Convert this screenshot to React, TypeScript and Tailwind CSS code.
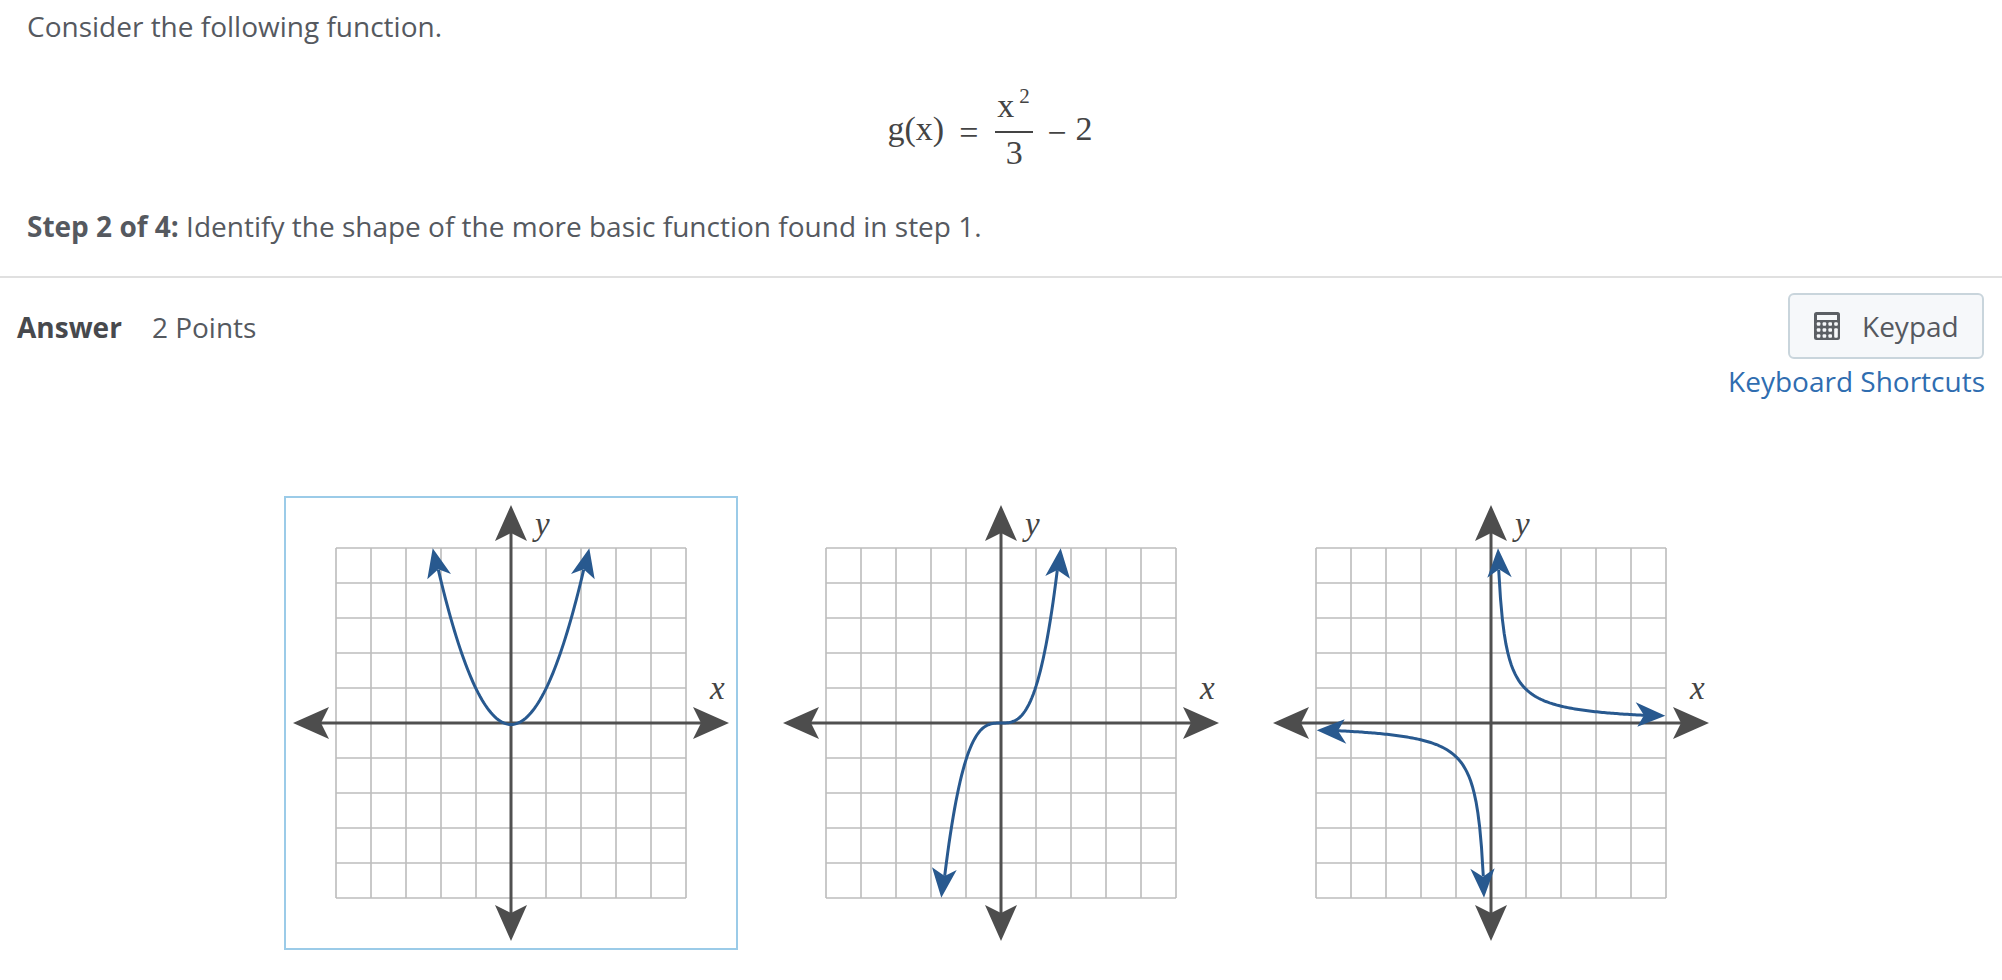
import type { ReactNode } from "react";

const GRID = [-175, -140, -105, -70, -35, 0, 35, 70, 105, 140, 175];

// samples a function into a path string, x in graph pixels
function plot(f: (x: number) => number, from: number, to: number) {
  const pts: string[] = [];
  const steps = 80;
  for (let i = 0; i <= steps; i++) {
    const x = from + ((to - from) * i) / steps;
    pts.push(`${x.toFixed(2)} ${f(x).toFixed(2)}`);
  }
  return "M" + pts.join("L");
}

function BlueHead({ points }: { points: string }) {
  return <polygon points={points} fill="#28598f" />;
}

function Graph({ selected, children }: { selected?: boolean; children: ReactNode }) {
  return (
    <div
      className={
        selected
          ? "w-[454px] h-[454px] border-2 border-[#9bcbe8]"
          : "w-[454px] h-[454px] border-2 border-transparent"
      }
    >
      <svg viewBox="-225 -225 450 450" className="w-[450px] h-[450px] block">
        {GRID.map((v) => (
          <g key={v} stroke="#bcbcbc" strokeWidth="1.6">
            <line x1={v} y1={-175} x2={v} y2={175} />
            <line x1={-175} y1={v} x2={175} y2={v} />
          </g>
        ))}
        <g stroke="#505050" strokeWidth="3">
          <line x1={-195} y1={0} x2={195} y2={0} />
          <line x1={0} y1={-195} x2={0} y2={195} />
        </g>
        <g fill="#4d4d4d">
          <polygon points="218,0 182,-16 190,0 182,16" />
          <polygon points="-218,0 -182,-16 -190,0 -182,16" />
          <polygon points="0,-218 -16,-182 0,-190 16,-182" />
          <polygon points="0,218 -16,182 0,190 16,182" />
        </g>
        <text x={24} y={-188} fontFamily="'Liberation Serif', serif" fontStyle="italic" fontSize="33" fill="#444444">
          y
        </text>
        <text x={199} y={-24} fontFamily="'Liberation Serif', serif" fontStyle="italic" fontSize="33" fill="#444444">
          x
        </text>
        {children}
      </svg>
    </div>
  );
}

function Curve({ d }: { d: string }) {
  return <path d={d} fill="none" stroke="#28598f" strokeWidth="3" />;
}

function CalculatorIcon() {
  const dots = [
    [0, 0], [1, 0], [2, 0], [3, 0],
    [0, 1], [1, 1], [2, 1],
    [0, 2], [1, 2], [2, 2],
  ];
  return (
    <svg viewBox="0 0 26 28" className="w-[26px] h-[28px] shrink-0">
      <rect x="0" y="0" width="26" height="28" rx="2.5" fill="#5b5f64" />
      <rect x="3" y="3" width="20" height="5" fill="#f6f8fa" />
      {dots.map(([c, r]) => (
        <rect key={`${c}-${r}`} x={2.8 + c * 5.8} y={10.2 + r * 6} width="3.6" height="3.6" rx="1" fill="#f6f8fa" />
      ))}
      <rect x="20.2" y="16.2" width="3.6" height="9.6" rx="1" fill="#f6f8fa" />
    </svg>
  );
}

export default function App() {
  return (
    <div className="w-[2002px] h-[980px] bg-white overflow-hidden font-['Open_Sans',sans-serif] text-[#55595f]">
      <p className="pt-[6px] px-[27px] text-[28px] leading-10">Consider the following function.</p>

      <div className="h-[160px] pt-[10px] pr-[22px] flex items-center justify-center font-['Liberation_Serif',serif] text-[34px] text-[#444444]">
        <span className="mb-[5px]">g(x)</span>
        <span className="ml-[15px] mt-[3px]">=</span>
        <span className="ml-[17px] flex flex-col w-[38px]">
          <span className="h-[42px] leading-[29px] border-b-2 border-[#444444] pl-[2px] whitespace-nowrap">
            x<sup className="text-[21px] ml-[5px] top-[-14px]">2</sup>
          </span>
          <span className="h-[38px] leading-[39px] text-center">3</span>
        </span>
        <span className="ml-[14px] mt-[3px]">−</span>
        <span className="ml-[9px] mb-[5px]">2</span>
      </div>

      <p className="px-[27px] text-[28px] leading-10">
        <span className="font-bold">Step 2 of 4:</span> Identify the shape of the more basic function found in step 1.
      </p>

      <div className="mt-[30px] h-[2px] bg-[#e0e0e0]" />

      <div className="flex justify-between pt-[15px] pl-[17px] pr-[18px]">
        <div className="flex items-center h-[66px] mt-px text-[28px]">
          <span className="font-bold text-[#47494d]">Answer</span>
          <span className="ml-[30px]">2 Points</span>
        </div>
        <div className="flex flex-col items-end">
          <button className="w-[196px] h-[66px] flex items-center pl-[24px] border-2 border-[#c9d5dc] rounded-[6px] bg-[#f6f8fa] text-[28px]">
            <CalculatorIcon />
            <span className="ml-[22px]">Keypad</span>
          </button>
          <a className="mt-[2px] mr-[-1px] text-[28px] leading-10 text-[#2f6db0]">Keyboard Shortcuts</a>
        </div>
      </div>

      <div className="mt-[95px] flex justify-center gap-[36px]">
        <Graph selected>
          <Curve d={plot((x) => 1.5 - 0.0293 * x * x, -72.7, 72.7)} />
          <BlueHead points="-78.3,-174.7 -83.7,-143.7 -72.7,-153.7 -60,-149" />
          <BlueHead points="78.3,-174.7 83.7,-143.7 72.7,-153.7 60,-149" />
        </Graph>
        <Graph>
          <Curve d={plot((x) => -0.000857 * x * x * x, -56.3, 56.3)} />
          <BlueHead points="59.7,-174.7 44.3,-147 56.3,-153 69,-144.3" />
          <BlueHead points="-59.7,174.7 -44.3,147 -56.3,153 -69,144.3" />
        </Graph>
        <Graph>
          <Curve d={plot((x) => -1180 / x, 7.7, 153)} />
          <Curve d={plot((x) => -1180 / x, -153, -7.7)} />
          <BlueHead points="7,-174.7 -3.7,-145.3 8,-153.7 20.7,-145.7" />
          <BlueHead points="-7,174.7 3.7,145.3 -8,153.7 -20.7,145.7" />
          <BlueHead points="174.3,-7.3 144.7,-20.7 153,-7.7 146.3,3.7" />
          <BlueHead points="-174.3,7.3 -144.7,20.7 -153,7.7 -146.3,-3.7" />
        </Graph>
      </div>
    </div>
  );
}
